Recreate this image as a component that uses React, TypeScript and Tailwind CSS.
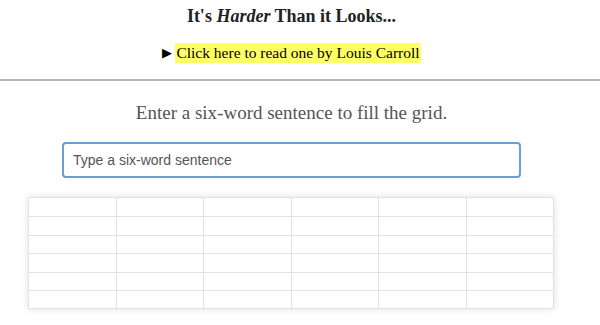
export default function App() {
  const rows = [0, 1, 2, 3, 4, 5];
  const cols = [0, 1, 2, 3, 4, 5];

  return (
    <div className="w-[600px] h-[325px] bg-white overflow-hidden font-['Liberation_Serif',serif]">
      {/* Header */}
      <div className="w-[583px] pt-[4px] text-center">
        <h1 className="text-[18px] leading-[24px] font-bold text-[#222]">
          It's <em>Harder</em> Than it Looks...
        </h1>
        <div className="mt-[15px] h-[20px] flex items-center justify-center text-[15.5px] text-black">
          <span className="text-[13px] leading-[20px] mr-[3px]">▶</span>
          <span className="bg-[#ffff66] px-[1px] py-[1px] leading-[18px]">Click here to read one by Louis Carroll</span>
        </div>
      </div>

      <div className="mt-[16px] h-[2px] bg-[#b5b5b5]" />

      {/* Prompt */}
      <p className="w-[583px] mt-[20px] text-center text-[19px] leading-[24px] text-[#555]">
        Enter a six-word sentence to fill the grid.
      </p>

      <div className="mt-[17px] pl-[62px]">
        <input
          type="text"
          placeholder="Type a six-word sentence"
          className="w-[459px] h-[36px] border-2 border-[#6a9fd4] rounded-[4px] px-[9px] text-[14px] font-['Liberation_Sans',sans-serif] text-[#333] placeholder:text-[#555] outline-none"
        />
      </div>

      {/* Grid */}
      <div className="mt-[19px] ml-[28px] w-[526px] border border-[#e2e2e2] shadow-[0_0_8px_rgba(0,0,0,0.12)] bg-white">
        {rows.map((r) => (
          <div key={r} className={`flex h-[18.4px] ${r > 0 ? "border-t border-[#e2e2e2]" : ""}`}>
            {cols.map((c) => (
              <div
                key={c}
                className={`flex-1 ${c > 0 ? "border-l border-[#e2e2e2]" : ""}`}
              />
            ))}
          </div>
        ))}
      </div>
    </div>
  );
}
